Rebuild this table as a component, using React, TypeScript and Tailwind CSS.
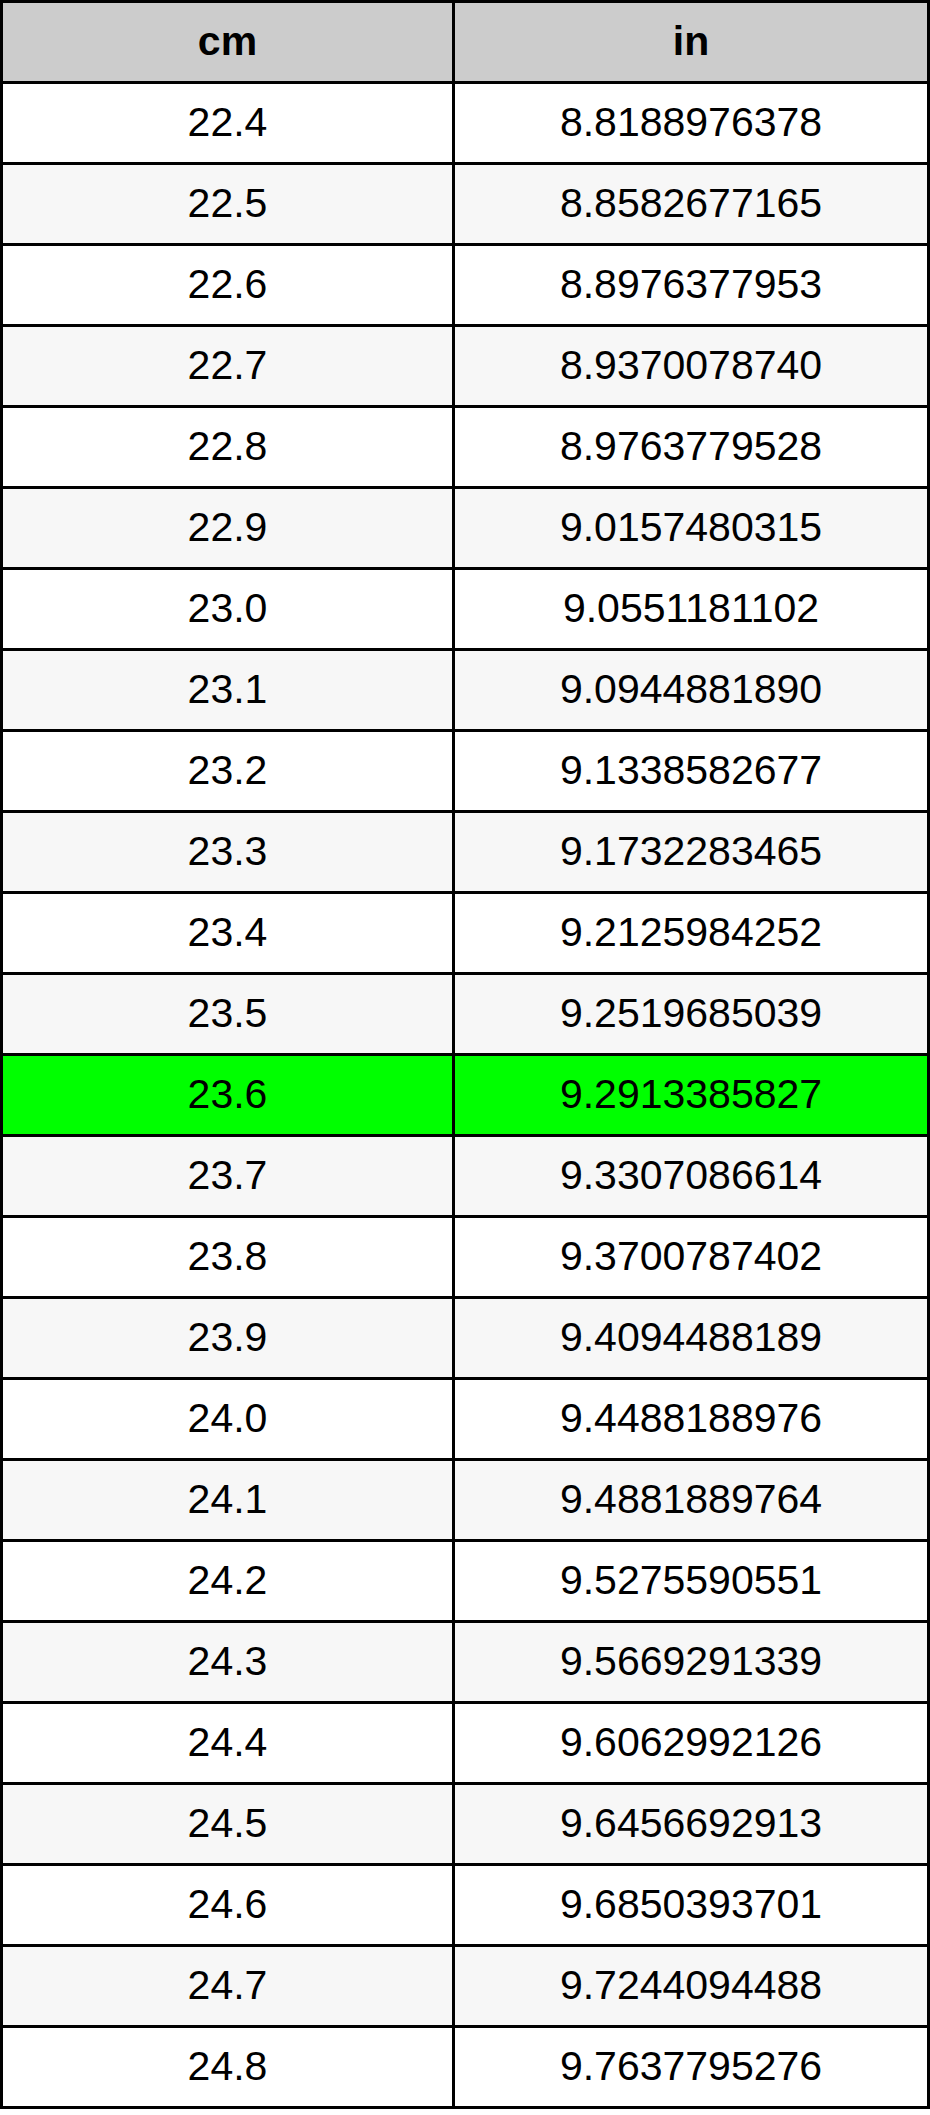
const rows: [string, string][] = [
  ['22.4', '8.8188976378'],
  ['22.5', '8.8582677165'],
  ['22.6', '8.8976377953'],
  ['22.7', '8.9370078740'],
  ['22.8', '8.9763779528'],
  ['22.9', '9.0157480315'],
  ['23.0', '9.0551181102'],
  ['23.1', '9.0944881890'],
  ['23.2', '9.1338582677'],
  ['23.3', '9.1732283465'],
  ['23.4', '9.2125984252'],
  ['23.5', '9.2519685039'],
  ['23.6', '9.2913385827'],
  ['23.7', '9.3307086614'],
  ['23.8', '9.3700787402'],
  ['23.9', '9.4094488189'],
  ['24.0', '9.4488188976'],
  ['24.1', '9.4881889764'],
  ['24.2', '9.5275590551'],
  ['24.3', '9.5669291339'],
  ['24.4', '9.6062992126'],
  ['24.5', '9.6456692913'],
  ['24.6', '9.6850393701'],
  ['24.7', '9.7244094488'],
  ['24.8', '9.7637795276'],
];

const cell =
  'flex items-center justify-center h-[81px] border-r-[3px] border-b-[3px] border-black';

export default function App() {
  return (
    <div className="w-[930px] bg-white font-['Liberation_Sans',Arial,sans-serif] text-black">
      <div className="border-l-[3px] border-t-[3px] border-black">
        <div className="grid grid-cols-[452px_475px] bg-[#cccccc] text-[41px] font-bold">
          <div className={cell}>cm</div>
          <div className={cell}>in</div>
        </div>
        {rows.map(([cm, inch], i) => {
          const bg =
            cm === '23.6' ? 'bg-[#00ff00]' : i % 2 === 1 ? 'bg-[#f7f7f7]' : 'bg-white';
          return (
            <div key={cm} className={`grid grid-cols-[452px_475px] text-[41px] ${bg}`}>
              <div className={cell}>{cm}</div>
              <div className={cell}>{inch}</div>
            </div>
          );
        })}
      </div>
    </div>
  );
}
